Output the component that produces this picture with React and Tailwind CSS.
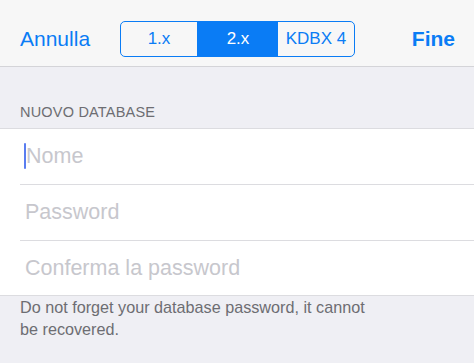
export default function App() {
  return (
    <div
      className="w-[474px] h-[363px] overflow-hidden bg-[#efeff4]"
      style={{ fontFamily: '"Liberation Sans", Arial, sans-serif' }}
    >
      {/* nav bar */}
      <div className="h-[67px] bg-[#f7f7f7] border-b border-[#d4d4d8] flex items-center pt-[11px] pl-5 pr-[19px]">
        <span className="text-[21px] text-[#0a7cf5] w-[100px]">Annulla</span>
        <div className="flex h-[36px] w-[235px] border border-[#0a7cf5] rounded-[5px] overflow-hidden text-[17px]">
          <div className="w-[77px] flex items-center justify-center text-[#0a7cf5] border-r border-[#0a7cf5]">1.x</div>
          <div className="w-[80px] flex items-center justify-center bg-[#0a7cf5] text-white">2.x</div>
          <div className="flex-1 flex items-center justify-center text-[#0a7cf5]">KDBX 4</div>
        </div>
        <span className="ml-auto text-[21px] font-bold text-[#0a7cf5]">Fine</span>
      </div>

      {/* section header */}
      <div className="h-[61px] flex items-end px-5 pb-[4px] text-[14.5px] text-[#6d6d72] tracking-[0.2px]">
        NUOVO DATABASE
      </div>

      {/* form */}
      <div className="bg-white border-y border-[#dcdce0]">
        <div className="h-[56px] flex items-center ml-5 border-b border-[#dcdce0] relative">
          <span className="absolute left-[4px] top-[14px] w-[2px] h-[26px] bg-[#5a7df0] rounded" />
          <span className="pl-[6px] text-[21.5px] text-[#c7c7cd]">Nome</span>
        </div>
        <div className="h-[56px] flex items-center ml-5 border-b border-[#dcdce0]">
          <span className="pl-[5px] text-[21.5px] text-[#c7c7cd]">Password</span>
        </div>
        <div className="h-[54px] flex items-center ml-5">
          <span className="pl-[5px] text-[21.5px] text-[#c7c7cd]">Conferma la password</span>
        </div>
      </div>

      {/* footer */}
      <div className="px-5 text-[16.2px] leading-[22px] text-[#6d6d72] w-[400px]">
        Do not forget your database password, it cannot be recovered.
      </div>
    </div>
  );
}
